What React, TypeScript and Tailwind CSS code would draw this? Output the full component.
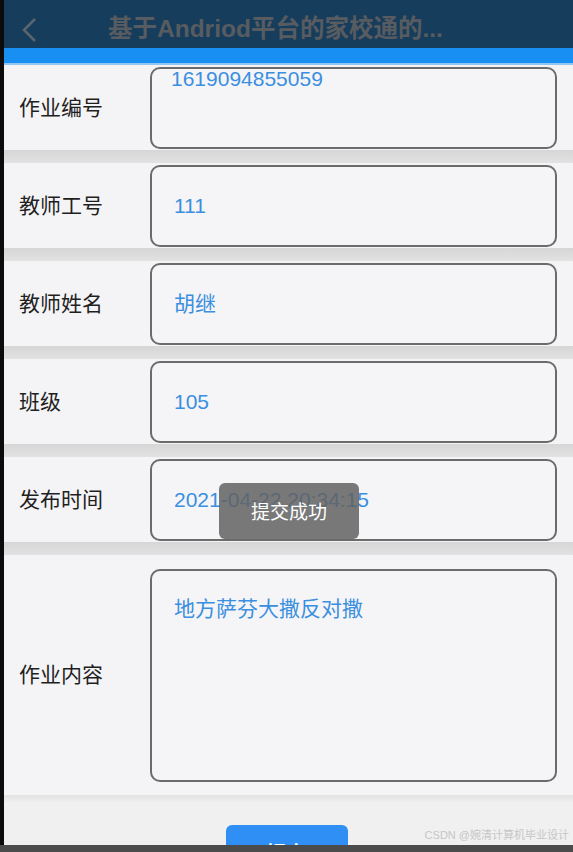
import React from 'react';

type Field = { label: string; value: string; top?: boolean };

const fields: Field[] = [
  { label: '作业编号', value: '1619094855059', top: true },
  { label: '教师工号', value: '111' },
  { label: '教师姓名', value: '胡继' },
  { label: '班级', value: '105' },
  { label: '发布时间', value: '2021-04-22 20:34:15' },
];

const font = { fontFamily: '"Liberation Sans", "Noto Sans CJK SC", sans-serif' };

const Row: React.FC<{ field: Field }> = ({ field }) => (
  <div className="flex h-[85px] shrink-0 bg-[#f4f4f6]">
    <div className="flex w-[146px] shrink-0 items-center pl-[15px] text-[21px] text-[#1f1f1f]">{field.label}</div>
    <div
      className={`mt-[2px] mb-[1px] mr-[16px] flex flex-1 rounded-[10px] border-2 border-[#6b6b6b] bg-[#f5f5f7] text-[21px] text-[#3b8fe0] ${
        field.top ? 'items-start pl-[19px] leading-[20px]' : 'items-center pl-[22px]'
      }`}
    >
      {field.value}
    </div>
  </div>
);

const App: React.FC = () => {
  return (
    <div className="relative flex h-[852px] w-[573px] flex-col overflow-hidden bg-black" style={font}>
      <div className="flex min-h-0 flex-1">
        <div className="w-[4px] shrink-0 bg-[#0b0b0b]" />
        <div className="flex min-w-0 flex-1 flex-col overflow-hidden bg-[#efeff0]">
          {/* 標題バー */}
          <div className="flex h-[48px] shrink-0 items-center bg-[#173d5c]">
            <svg width="20" height="28" viewBox="0 0 20 28" className="ml-[16px] mt-[12px] shrink-0">
              <path d="M15 3 L4 14 L15 25" fill="none" stroke="#5b6670" strokeWidth="2.5" />
            </svg>
            <div className="ml-[68px] mt-[11px] whitespace-nowrap text-[24.5px] font-bold text-[#585c60]">基于Andriod平台的家校通的...</div>
          </div>
          <div className="h-[17px] shrink-0 border-b-[2px] border-[#8fc6f2] bg-[#1890f3]" />

          {fields.map(f => (
            <React.Fragment key={f.label}>
              <Row field={f} />
              <div className="h-[13px] shrink-0 bg-gradient-to-b from-[#d6d6d6] to-[#e2e2e2]" />
            </React.Fragment>
          ))}

          {/* 作業内容 */}
          <div className="flex h-[240px] shrink-0 bg-[#f4f4f6]">
            <div className="flex w-[146px] shrink-0 items-center pl-[15px] text-[21px] text-[#1f1f1f]">作业内容</div>
            <div className="mt-[14px] mb-[13px] mr-[16px] flex-1 rounded-[10px] border-2 border-[#6b6b6b] bg-[#f5f5f7] pl-[22px] pt-[22px] text-[21px] text-[#3b8fe0]">
              地方萨芬大撒反对撒
            </div>
          </div>

          <div className="flex flex-1 justify-center bg-gradient-to-b from-[#e2e2e2] to-[#f0f0f0] to-[8px] pr-[4px] pt-[30px]">
            <div className="flex h-[42px] w-[122px] shrink-0 justify-center rounded-[6px] bg-[#2f8ff5] pt-[14px] text-[20px] font-bold text-white">
              提交
            </div>
          </div>
        </div>
      </div>
      <div className="h-[7px] shrink-0 bg-[#4b4b4b]" />

      {/* トースト */}
      <div className="absolute left-[219px] top-[483px] flex h-[56px] w-[140px] items-center justify-center rounded-[6px] bg-[#626262]/85 pt-[4px] text-[19px] text-white">
        提交成功
      </div>

      <div className="absolute bottom-[9px] right-[4px] text-[11px] text-[#c6c6c6]">CSDN @婉清计算机毕业设计</div>
    </div>
  );
};

export default App;
